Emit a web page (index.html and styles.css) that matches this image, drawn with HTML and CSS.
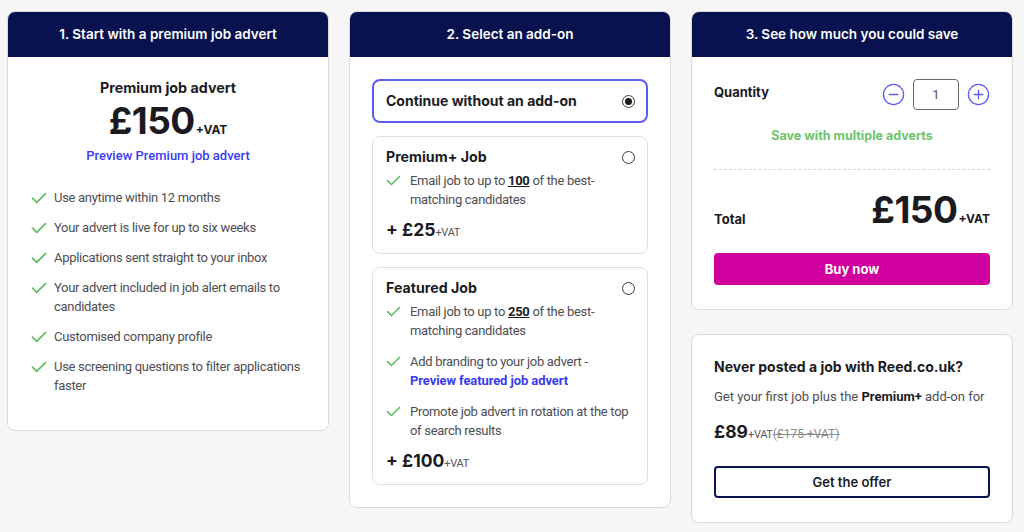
FILE: index.html
```html
<!DOCTYPE html>
<html lang="en">
<head>
<meta charset="utf-8">
<title>Post a job</title>
<link rel="stylesheet" href="styles.css">
</head>
<body>
<main class="grid">
  <section class="card">
    <header class="card-head">1. Start with a premium job advert</header>
    <div class="card-body body-1">
      <div class="product">
        <h2 class="product-title">Premium job advert</h2>
        <div class="big-price"><span class="amount">£150</span><span class="vat">+VAT</span></div>
        <a class="link" href="#">Preview Premium job advert</a>
      </div>
      <ul class="checks checks-lg">
        <li><svg class="tick" viewBox="0 0 16 12"><path d="M1.5 6.2l4.2 4.2L14.5 1.6"/></svg><span>Use anytime within 12 months</span></li>
        <li><svg class="tick" viewBox="0 0 16 12"><path d="M1.5 6.2l4.2 4.2L14.5 1.6"/></svg><span>Your advert is live for up to six weeks</span></li>
        <li><svg class="tick" viewBox="0 0 16 12"><path d="M1.5 6.2l4.2 4.2L14.5 1.6"/></svg><span>Applications sent straight to your inbox</span></li>
        <li><svg class="tick" viewBox="0 0 16 12"><path d="M1.5 6.2l4.2 4.2L14.5 1.6"/></svg><span>Your advert included in job alert emails to candidates</span></li>
        <li><svg class="tick" viewBox="0 0 16 12"><path d="M1.5 6.2l4.2 4.2L14.5 1.6"/></svg><span>Customised company profile</span></li>
        <li><svg class="tick" viewBox="0 0 16 12"><path d="M1.5 6.2l4.2 4.2L14.5 1.6"/></svg><span>Use screening questions to filter applications faster</span></li>
      </ul>
    </div>
  </section>

  <section class="card">
    <header class="card-head">2. Select an add-on</header>
    <div class="card-body body-2">
      <div class="option option-selected">
        <span class="option-title">Continue without an add-on</span>
        <span class="radio radio-on"></span>
      </div>
      <div class="option option-stack">
        <div class="option-top">
          <span class="option-title">Premium+ Job</span>
          <span class="radio"></span>
        </div>
        <ul class="checks">
          <li><svg class="tick" viewBox="0 0 16 12"><path d="M1.5 6.2l4.2 4.2L14.5 1.6"/></svg><span>Email job to up to <b class="u">100</b> of the best-matching candidates</span></li>
        </ul>
        <div class="addon-price"><span class="amt">+ £25</span><span class="vat-sm">+VAT</span></div>
      </div>
      <div class="option option-stack">
        <div class="option-top">
          <span class="option-title">Featured Job</span>
          <span class="radio"></span>
        </div>
        <ul class="checks">
          <li><svg class="tick" viewBox="0 0 16 12"><path d="M1.5 6.2l4.2 4.2L14.5 1.6"/></svg><span>Email job to up to <b class="u">250</b> of the best-matching candidates</span></li>
          <li><svg class="tick" viewBox="0 0 16 12"><path d="M1.5 6.2l4.2 4.2L14.5 1.6"/></svg><span>Add branding to your job advert - <a class="link link-bold" href="#">Preview featured job advert</a></span></li>
          <li><svg class="tick" viewBox="0 0 16 12"><path d="M1.5 6.2l4.2 4.2L14.5 1.6"/></svg><span>Promote job advert in rotation at the top of search results</span></li>
        </ul>
        <div class="addon-price"><span class="amt">+ £100</span><span class="vat-sm">+VAT</span></div>
      </div>
    </div>
  </section>

  <div class="stack">
    <section class="card">
      <header class="card-head">3. See how much you could save</header>
      <div class="card-body body-3">
        <div class="qty-row">
          <span class="label">Quantity</span>
          <div class="stepper">
            <button class="step" aria-label="Decrease"><svg viewBox="0 0 24 24"><circle cx="12" cy="12" r="10.5"/><path d="M7.5 12h9"/></svg></button>
            <div class="qty-input">1</div>
            <button class="step" aria-label="Increase"><svg viewBox="0 0 24 24"><circle cx="12" cy="12" r="10.5"/><path d="M7.5 12h9M12 7.5v9"/></svg></button>
          </div>
        </div>
        <p class="save">Save with multiple adverts</p>
        <hr class="dash">
        <div class="total-row">
          <span class="label">Total</span>
          <div class="big-price"><span class="amount">£150</span><span class="vat">+VAT</span></div>
        </div>
        <button class="btn-buy">Buy now</button>
      </div>
    </section>

    <section class="card">
      <div class="card-body body-4">
        <h3 class="offer-title">Never posted a job with Reed.co.uk?</h3>
        <p class="offer-text">Get your first job plus the <b>Premium+</b> add-on for</p>
        <div class="offer-price"><span class="amt">£89</span><span class="vat-sm">+VAT</span><s class="was">(£175 +VAT)</s></div>
        <button class="btn-outline">Get the offer</button>
      </div>
    </section>
  </div>
</main>
</body>
</html>
```

FILE: styles.css
```css
* { box-sizing: border-box; }

html, body {
  margin: 0;
  background: #f6f6f6;
  font-family: Inter, "Noto Sans", "Liberation Sans", sans-serif;
  color: #1b1b1f;
}

.grid {
  display: grid;
  grid-template-columns: 322px 322px 322px;
  column-gap: 20px;
  align-items: start;
  padding: 11px 11px 0 7px;
}

.stack {
  display: flex;
  flex-direction: column;
  gap: 24px;
}

.card {
  background: #fff;
  border: 1px solid #dadada;
  border-radius: 8px;
  overflow: hidden;
}

.card-head {
  height: 46px;
  margin: -1px -1px 0;
  background: #08124f;
  color: #fff;
  font-size: 13.5px;
  font-weight: 600;
  display: flex;
  align-items: center;
  justify-content: center;
}

.card-body { padding: 0 22px; }

/* column 1 */
.body-1 { padding-top: 21px; padding-bottom: 35px; }

.product {
  display: flex;
  flex-direction: column;
  align-items: center;
}

.product-title {
  margin: 0;
  font-size: 14.3px;
  line-height: 20px;
  font-weight: 700;
}

.big-price {
  display: block;
  height: 44px;
  line-height: 44px;
  white-space: nowrap;
}

.big-price .amount {
  font-size: 37px;
  font-weight: 700;
  letter-spacing: -0.5px;
}

.big-price .vat {
  font-size: 12px;
  line-height: 1;
  font-weight: 700;
  margin-left: 1px;
}

.product .big-price { margin-top: 1px; }

.link {
  color: #3b3bf0;
  text-decoration: none;
  font-family: Roboto, "Liberation Sans", sans-serif;
  font-weight: 500;
  font-size: 13px;
  letter-spacing: 0;
}

.product .link {
  line-height: 20px;
  margin-top: 3px;
}

.link-bold { font-weight: 700; letter-spacing: -0.1px; }

.checks {
  list-style: none;
  margin: 0;
  padding: 0;
  display: flex;
  flex-direction: column;
  gap: 12px;
  font-family: Roboto, "Liberation Sans", sans-serif;
  font-size: 13px;
  line-height: 19px;
  letter-spacing: -0.3px;
  color: #4e4e53;
}

.checks li {
  display: flex;
  align-items: flex-start;
}

.tick {
  flex: none;
  width: 15px;
  height: 11px;
  margin-top: 4px;
  margin-right: 9px;
  fill: none;
  stroke: #62bd63;
  stroke-width: 1.8;
  stroke-linecap: round;
  stroke-linejoin: round;
}

.checks-lg {
  margin-top: 22px;
  padding-left: 1px;
  gap: 11px;
}

.checks-lg .tick {
  width: 16px;
  height: 12px;
  margin-right: 7px;
}

.u {
  color: #1b1b1f;
  text-decoration: underline;
  font-weight: 700;
}

/* column 2 */
.body-2 {
  padding-top: 22px;
  padding-bottom: 22px;
  display: flex;
  flex-direction: column;
  gap: 13px;
}

.option {
  border: 1px solid #dedede;
  border-radius: 8px;
  padding: 10px 12px 11px 13px;
}

.option-selected {
  height: 44px;
  border: 2px solid #5d5df2;
  padding: 0 11px 0 12px;
  display: flex;
  align-items: center;
  justify-content: space-between;
}

.option-title {
  font-size: 14.2px;
  line-height: 20px;
  font-weight: 700;
}

.option-selected .option-title { font-size: 14px; }

.option-top {
  display: flex;
  align-items: center;
  justify-content: space-between;
  margin-bottom: 4px;
}

.radio {
  width: 13px;
  height: 13px;
  border: 1px solid #3a3a3a;
  border-radius: 50%;
  display: flex;
  align-items: center;
  justify-content: center;
}

.radio-on::after {
  content: "";
  width: 7px;
  height: 7px;
  border-radius: 50%;
  background: #1b1b1f;
}

.addon-price {
  margin-top: 9px;
  height: 24px;
  line-height: 24px;
  white-space: nowrap;
}

.addon-price .amt, .offer-price .amt {
  font-size: 17.5px;
  font-weight: 700;
}

.vat-sm {
  font-family: Roboto, "Liberation Sans", sans-serif;
  font-size: 11px;
  line-height: 1;
  color: #555;
  letter-spacing: -0.3px;
}

/* column 3 */
.body-3 { padding-top: 22px; padding-bottom: 24px; }

.qty-row {
  display: flex;
  justify-content: space-between;
  align-items: flex-start;
}

.label {
  font-size: 13px;
  font-weight: 700;
  line-height: 20px;
}

.qty-row .label { padding-top: 3px; }

.stepper {
  display: flex;
  align-items: center;
  gap: 8px;
}

.step {
  width: 23px;
  height: 23px;
  padding: 0;
  border: 0;
  background: none;
  display: block;
}

.step svg {
  width: 23px;
  height: 23px;
  fill: none;
  stroke: #5e5ef5;
  stroke-width: 1.4;
  stroke-linecap: round;
  display: block;
}

.qty-input {
  width: 46px;
  height: 31px;
  border: 1px solid #6a6a6a;
  border-radius: 4px;
  display: flex;
  align-items: center;
  justify-content: center;
  font-family: Roboto, "Liberation Sans", sans-serif;
  font-size: 13px;
  color: #555;
}

.save {
  margin: 16px 0 0;
  text-align: center;
  font-size: 12.5px;
  font-weight: 700;
  line-height: 20px;
  color: #6cc36c;
}

.dash {
  margin: 23px 0 0;
  border: 0;
  border-top: 1px dashed #d8d8d8;
}

.total-row {
  margin-top: 18px;
  display: flex;
  justify-content: space-between;
  align-items: baseline;
}

.total-row .label { position: relative; top: 1px; }

.btn-buy {
  display: block;
  margin-top: 21px;
  width: 100%;
  height: 32px;
  border: 0;
  border-radius: 4px;
  background: #d0009e;
  color: #fff;
  font-family: inherit;
  font-size: 13px;
  font-weight: 700;
}

.body-4 { padding-top: 22px; padding-bottom: 24px; }

.offer-title {
  margin: 0;
  font-size: 14px;
  line-height: 20px;
  font-weight: 700;
}

.offer-text {
  margin: 10px 0 0;
  font-family: Roboto, "Liberation Sans", sans-serif;
  font-size: 13px;
  line-height: 20px;
  color: #4e4e53;
}

.offer-text b { color: #1b1b1f; }

.offer-price {
  margin-top: 12px;
  height: 26px;
  line-height: 26px;
  white-space: nowrap;
}

.was {
  font-family: Roboto, "Liberation Sans", sans-serif;
  font-size: 12px;
  color: #8a8a8a;
}

.btn-outline {
  display: block;
  margin-top: 21px;
  width: 100%;
  height: 32px;
  border: 2px solid #08124f;
  border-radius: 4px;
  background: #fff;
  color: #1b1b1f;
  font-family: inherit;
  font-size: 13px;
  font-weight: 600;
}
```
